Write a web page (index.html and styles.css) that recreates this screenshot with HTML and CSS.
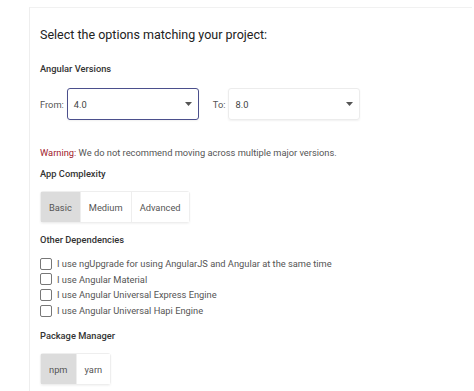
FILE: index.html
```html
<!DOCTYPE html>
<html lang="en">
<head>
    <meta charset="UTF-8">
    <meta name="viewport" content="width=device-width, initial-scale=1.0">
    <title>Update Guide</title>
    <link rel="stylesheet" href="styles.css">
</head>
<body>
    <div class="card">
        <h2>Select the options matching your project:</h2>

        <div class="label">Angular Versions</div>
        <div class="versions">
            <span class="field-label">From:</span>
            <div class="select focused">
                <span>4.0</span>
                <svg width="7" height="4" viewBox="0 0 7 4"><path d="M0 0h7L3.5 4z" fill="#555"/></svg>
            </div>
            <span class="field-label to">To:</span>
            <div class="select">
                <span>8.0</span>
                <svg width="7" height="4" viewBox="0 0 7 4"><path d="M0 0h7L3.5 4z" fill="#555"/></svg>
            </div>
        </div>

        <p class="warning"><span class="warn">Warning:</span> We do not recommend moving across multiple major versions.</p>

        <div class="label">App Complexity</div>
        <div class="toggle">
            <button class="active">Basic</button>
            <button>Medium</button>
            <button>Advanced</button>
        </div>

        <div class="label">Other Dependencies</div>
        <div class="checks">
            <label><span class="box"></span>I use ngUpgrade for using AngularJS and Angular at the same time</label>
            <label><span class="box"></span>I use Angular Material</label>
            <label><span class="box"></span>I use Angular Universal Express Engine</label>
            <label><span class="box"></span>I use Angular Universal Hapi Engine</label>
        </div>

        <div class="label">Package Manager</div>
        <div class="toggle">
            <button class="active">npm</button>
            <button>yarn</button>
        </div>
    </div>
</body>
</html>
```

FILE: styles.css
```css
body {
    margin: 0;
    font-family: Roboto, "Liberation Sans", sans-serif;
    color: #333;
    background: #fff;
}
.card {
    margin: 7px 2px 0 29px;
    padding: 18px 10px 10px 10px;
    border-top: 1px solid #f1f1f1;
    border-left: 1px solid #eee;
    min-height: 400px;
}
h2 {
    font-size: 12.5px;
    line-height: 18px;
    font-weight: 400;
    margin: 0 0 19px 0;
    color: #222;
}
.label {
    font-size: 9.3px;
    line-height: 12px;
    font-weight: 500;
    color: #333;
}
.versions {
    display: flex;
    align-items: center;
    margin-top: 13px;
    font-size: 9.3px;
}
.field-label {
    color: #555;
    margin-right: 3px;
}
.field-label.to {
    margin-left: 14px;
    margin-right: 3px;
}
.select {
    width: 132px;
    height: 32px;
    box-sizing: border-box;
    border: 1px solid #ececec;
    border-radius: 3px;
    display: flex;
    align-items: center;
    justify-content: space-between;
    padding: 0 6px 0 6px;
    color: #444;
    box-shadow: 0 1px 2px rgba(0,0,0,0.06);
}
.select.focused {
    border: 1px solid #4b4f8c;
}
.warning {
    font-size: 9.3px;
    line-height: 12px;
    color: #555;
    margin: 27px 0 9px 0;
}
.warn {
    color: #a0182b;
}
.toggle {
    display: inline-flex;
    margin: 11px 0 11px 0;
    border: 1px solid #eee;
    border-radius: 3px;
    box-shadow: 0 1px 2px rgba(0,0,0,0.05);
    vertical-align: top;
}
.toggle button {
    font-family: inherit;
    font-size: 9.3px;
    color: #555;
    background: #fff;
    border: none;
    border-left: 1px solid #eee;
    height: 30px;
    padding: 0 8px;
}
.toggle button:first-child {
    border-left: none;
}
.toggle button.active {
    background: #dcdcdc;
}
.checks {
    margin: 10px 0 12px 0;
    font-size: 9.3px;
    color: #555;
}
.checks label {
    display: flex;
    align-items: center;
    height: 15.6px;
}
.box {
    width: 10px;
    height: 10px;
    border: 1px solid #777;
    border-radius: 2px;
    margin-right: 5px;
}
```
